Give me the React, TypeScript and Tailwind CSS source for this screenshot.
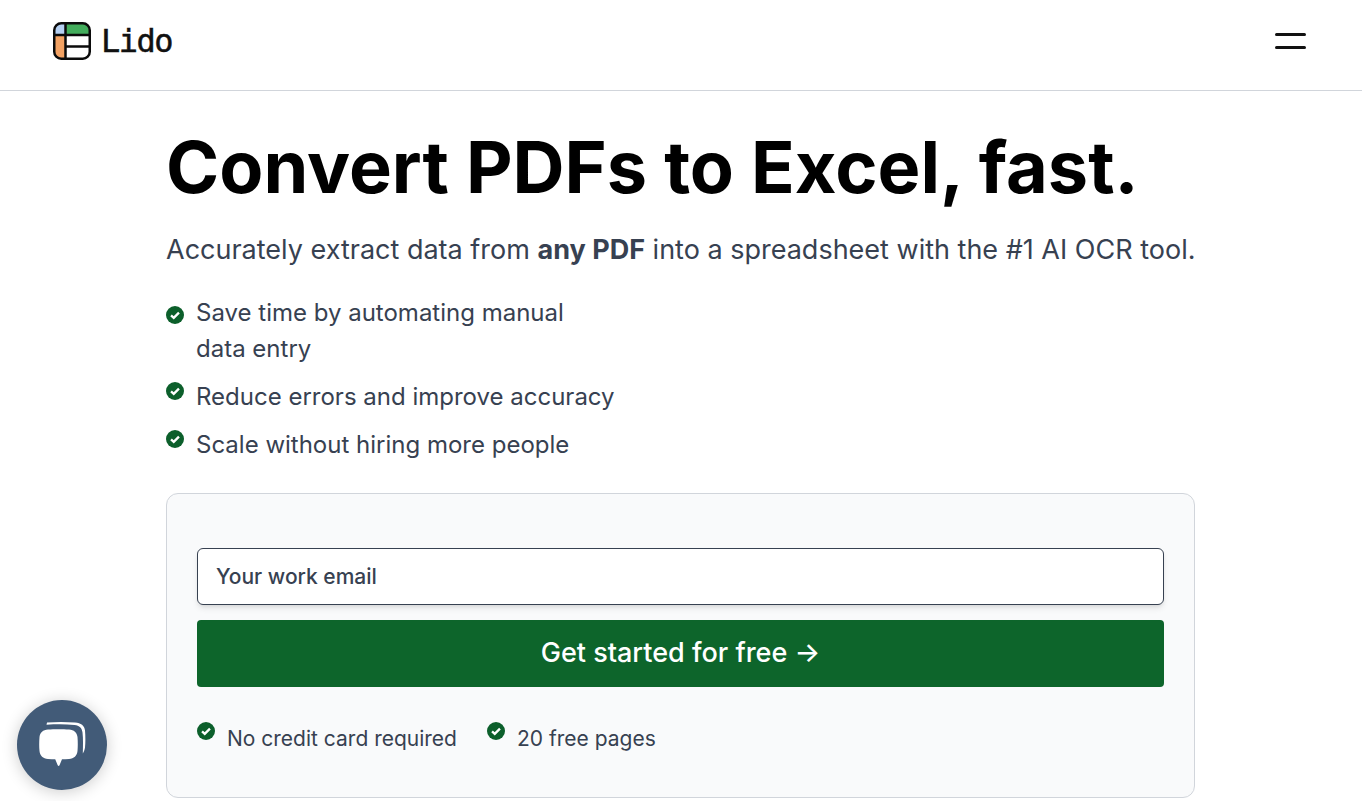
const CheckIcon = ({ className = "" }: { className?: string }) => (
  <svg viewBox="0 0 20 20" className={`w-[18px] h-[18px] shrink-0 ${className}`}>
    <circle cx="10" cy="10" r="10" fill="#0c5f2b" />
    <path d="M5.600 10.400l3 2.800 5.800-5.800" fill="none" stroke="#fff" strokeWidth="2.600" />
  </svg>
);

const Logo = () => (
  <svg viewBox="0 0 38 38" className="w-[38px] h-[38px]">
    <rect x="1.250" y="1.250" width="35.500" height="35.500" rx="7" fill="#fff" />
    <path d="M2 13V8a6 6 0 0 1 6-6h5v11z" fill="#b5d0f2" />
    <path d="M13 2h17a6 6 0 0 1 6 6v5H13z" fill="#43ad5c" />
    <path d="M2 13h11v23H8a6 6 0 0 1-6-6z" fill="#f3a263" />
    <rect x="1.250" y="1.250" width="35.500" height="35.500" rx="7" fill="none" stroke="#0b0b0b" strokeWidth="2.500" />
    <path d="M12.500 2v34M2 13h34M13 24.500h23" fill="none" stroke="#0b0b0b" strokeWidth="2.500" />
  </svg>
);

const ChatIcon = () => (
  <svg viewBox="0 0 48 48" className="w-[48px] h-[48px]">
    <path d="M9 1.500c9-.7 19-.7 28 0 6 .5 9.500 3 10 8 .5 6 .5 12 0 17-.3 2-.9 4-2.200 6 .3-8 .4-15-.3-21-.5-4.500-3-7-8-7.500-9-.8-18-.8-28-.2z" fill="#fff" />
    <path d="M10 8.500c6-.5 15-.5 21 0 5 .4 8 3 8.500 7.500.4 5 .4 10 0 14-.5 5-3.500 7.500-8.500 8-2.500.2-5 .3-7 .3l-2.500 6c-.4.800-1.300.800-1.800 0l-2.500-6c-2.200 0-4.700-.1-7.200-.3-5-.5-8-3-8.500-8-.4-4-.4-9 0-14 .5-4.500 3.500-7.100 8.500-7.500z" fill="#fff" />
  </svg>
);

const features = [
  { text: <>Save time by automating manual<br />data entry</>, mt: "mt-[11px]" },
  { text: "Reduce errors and improve accuracy", mt: "mt-[3px]" },
  { text: "Scale without hiring more people", mt: "mt-[3px]" },
];

export default function App() {
  return (
    <div className="min-h-screen bg-white font-['Inter',sans-serif] overflow-hidden">
      <header className="flex justify-between items-center h-[91px] pl-[53px] pr-[56px] pb-[8px] border-b border-[#d1d5db]">
        <div className="flex items-center gap-[10px]">
          <Logo />
          <span className="font-['DejaVu_Sans_Mono',monospace] text-[32px] leading-none tracking-[-1.500px] font-medium text-[#111] [-webkit-text-stroke:0.5px_#111]">Lido</span>
        </div>
        <button className="flex flex-col gap-[10px] w-[31px]">
          <span className="block h-[3px] bg-[#111] rounded-sm" />
          <span className="block h-[3px] bg-[#111] rounded-sm" />
        </button>
      </header>

      <main className="ml-[166px] w-[1029px]">
        <h1 className="mt-[32px] text-[72px] leading-[88px] font-bold text-black whitespace-nowrap">Convert PDFs to Excel, fast.</h1>
        <p className="mt-[20px] text-[27px] leading-[38px] text-[#374151] whitespace-nowrap">
          Accurately extract data from <strong className="font-bold">any PDF</strong> into a spreadsheet with the #1 AI OCR tool.
        </p>
        <ul className="mt-[26px] flex flex-col gap-[12px]">
          {features.map((f, i) => (
            <li key={i} className="flex gap-[12px] text-2xl leading-9 text-[#374151]">
              <CheckIcon className={f.mt} />
              <span>{f.text}</span>
            </li>
          ))}
        </ul>

        <section className="mt-[30px] h-[305px] px-[30px] pt-[54px] bg-[#f9fafb] border border-[#d1d5db] rounded-xl">
          <input
            placeholder="Your work email"
            className="block w-full h-[57px] px-[18px] bg-white border border-[#374151] rounded-md shadow-md text-[21px] font-medium text-[#374151] placeholder:text-[#374151] outline-none"
          />
          <button className="block w-full h-[67px] mt-[15px] bg-[#0d652b] rounded text-[27px] font-medium text-white">
            Get started for free →
          </button>
          <div className="flex gap-[30px] mt-[34px] text-[21px] leading-9 text-[#374151]">
            <div className="flex gap-[12px]">
              <CheckIcon className="mt-[1px]" />
              <span>No credit card required</span>
            </div>
            <div className="flex gap-[12px]">
              <CheckIcon className="mt-[1px]" />
              <span>20 free pages</span>
            </div>
          </div>
        </section>
      </main>

      <button className="fixed left-[17px] top-[700px] flex justify-center items-center w-[90px] h-[90px] rounded-full bg-[#425b78] shadow-[0_2px_16px_rgba(0,0,0,0.2)]">
        <ChatIcon />
      </button>
    </div>
  );
}
